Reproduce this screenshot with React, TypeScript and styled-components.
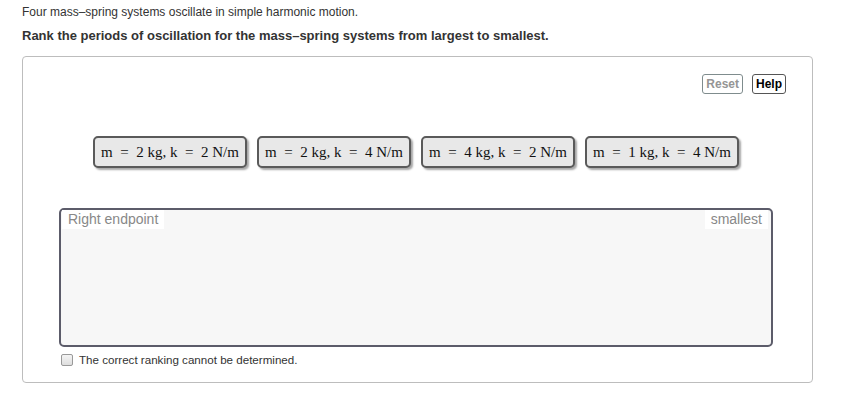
import styled, { createGlobalStyle } from "styled-components";

const GlobalStyle = createGlobalStyle`
  html, body {
    margin: 0;
    padding: 0;
    background: #fff;
  }
  body {
    font-family: "Liberation Sans", Arial, sans-serif;
    color: #333;
  }
`;

const items = [
  { m: 2, k: 2 },
  { m: 2, k: 4 },
  { m: 4, k: 2 },
  { m: 1, k: 4 },
];

const Page = styled.div`
  width: 858px;
  height: 394px;
  box-sizing: border-box;
  padding: 4px 45px 0 22px;
`;

const Intro = styled.p`
  margin: 0;
  font-size: 12px;
  line-height: 16px;
  color: #333;
`;

const Prompt = styled.p`
  margin: 8px 0 0;
  font-size: 13px;
  line-height: 16px;
  font-weight: bold;
  color: #333;
`;

const Panel = styled.div`
  margin-top: 12px;
  height: 327px;
  box-sizing: border-box;
  border: 1px solid #bdbdbd;
  border-radius: 4px;
  display: flex;
  flex-direction: column;
  padding: 17px 39px 0 36px;
`;

const Toolbar = styled.div`
  display: flex;
  justify-content: flex-end;
  gap: 9px;
  margin-right: -13px;
`;

const ToolButton = styled.button<{ $disabled?: boolean }>`
  font-family: "Liberation Sans", Arial, sans-serif;
  font-size: 12px;
  font-weight: bold;
  height: 20px;
  padding: 0 3px;
  background: #fff;
  border: 1px solid ${(p) => (p.$disabled ? "#7f8c8d" : "#555")};
  border-radius: 3px;
  color: ${(p) => (p.$disabled ? "#959595" : "#000")};
  cursor: pointer;
`;

const Tray = styled.div`
  display: flex;
  gap: 10px;
  margin-top: 42px;
  padding-left: 34px;
`;

const Card = styled.div`
  width: 154px;
  height: 32px;
  box-sizing: border-box;
  border: 2px solid #5a5a5a;
  border-radius: 5px;
  background: #e8e8e8;
  box-shadow: 2px 2px 2px rgba(0, 0, 0, 0.35);
  display: flex;
  align-items: center;
  justify-content: center;
  font-family: "Liberation Serif", "Times New Roman", serif;
  font-size: 15px;
  color: #111;
  white-space: pre;
`;

const DropZone = styled.div`
  margin-top: 40px;
  height: 139px;
  box-sizing: border-box;
  border: 2px solid #5c5c6a;
  border-radius: 5px;
  background: #f7f7f7;
  display: flex;
  justify-content: space-between;
  align-items: flex-start;
  padding: 0 3px 0 1px;
`;

const ZoneLabel = styled.span`
  background: #fff;
  color: #888;
  font-size: 14px;
  line-height: 19px;
  padding: 0 6px 0 6px;
`;

const CheckRow = styled.label`
  display: flex;
  align-items: center;
  gap: 6px;
  margin-top: 6px;
  font-size: 11.6px;
  color: #333;
`;

const Box = styled.span`
  width: 12px;
  height: 12px;
  box-sizing: border-box;
  border: 1px solid #999;
  border-radius: 2px;
  background: linear-gradient(#f4f4f4, #dedede);
  margin-left: 2px;
`;

export default function App() {
  return (
    <Page>
      <GlobalStyle />
      <Intro>Four mass–spring systems oscillate in simple harmonic motion.</Intro>
      <Prompt>Rank the periods of oscillation for the mass–spring systems from largest to smallest.</Prompt>
      <Panel>
        <Toolbar>
          <ToolButton $disabled>Reset</ToolButton>
          <ToolButton>Help</ToolButton>
        </Toolbar>
        <Tray>
          {items.map((it, i) => (
            <Card key={i}>
              {`m  =  ${it.m} kg, k  =  ${it.k} N/m`}
            </Card>
          ))}
        </Tray>
        <DropZone>
          <ZoneLabel>Right endpoint</ZoneLabel>
          <ZoneLabel>smallest</ZoneLabel>
        </DropZone>
        <CheckRow>
          <Box />
          The correct ranking cannot be determined.
        </CheckRow>
      </Panel>
    </Page>
  );
}
